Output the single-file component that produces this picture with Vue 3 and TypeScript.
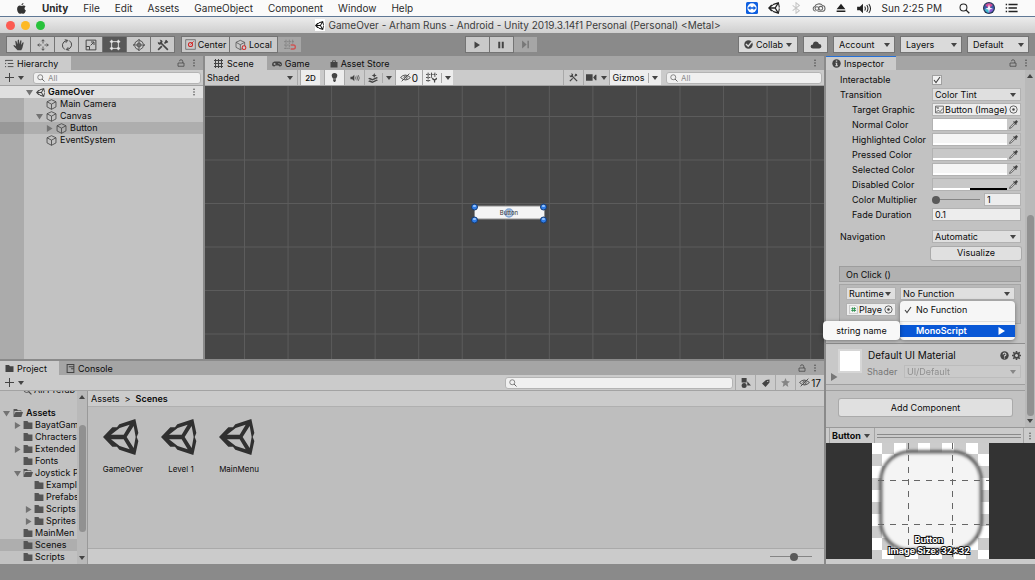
<script setup lang="ts">
import { ref } from 'vue'

interface TreeRow {
  name: string
  depth: number
  arrow?: 'open' | 'closed'
  icon: string
  selected?: boolean
  bold?: boolean
}

interface ColorRow {
  label: string
  value: string
  alpha: number
}

const menus = ['File', 'Edit', 'Assets', 'GameObject', 'Component', 'Window', 'Help']
const tools = ['hand', 'move', 'rotate', 'scale', 'rect', 'transform', 'wrench']
const activeTool = ref('rect')

const hierarchy: TreeRow[] = [
  { name: 'Main Camera', depth: 1, icon: 'cube' },
  { name: 'Canvas', depth: 1, arrow: 'open', icon: 'cube' },
  { name: 'Button', depth: 2, arrow: 'closed', icon: 'cube', selected: true },
  { name: 'EventSystem', depth: 1, icon: 'cube' },
]

const folders: TreeRow[] = [
  { name: 'Assets', depth: 0, arrow: 'open', icon: 'folder-open', bold: true },
  { name: 'BayatGam', depth: 1, arrow: 'closed', icon: 'folder' },
  { name: 'Chracters', depth: 1, icon: 'folder' },
  { name: 'Extended', depth: 1, arrow: 'closed', icon: 'folder' },
  { name: 'Fonts', depth: 1, icon: 'folder' },
  { name: 'Joystick P', depth: 1, arrow: 'open', icon: 'folder-open' },
  { name: 'Example', depth: 2, icon: 'folder' },
  { name: 'Prefabs', depth: 2, icon: 'folder' },
  { name: 'Scripts', depth: 2, arrow: 'closed', icon: 'folder' },
  { name: 'Sprites', depth: 2, arrow: 'closed', icon: 'folder' },
  { name: 'MainMen', depth: 1, icon: 'folder' },
  { name: 'Scenes', depth: 1, icon: 'folder', selected: true },
  { name: 'Scripts', depth: 1, icon: 'folder' },
]

const scenes = ['GameOver', 'Level 1', 'MainMenu']

const colors = ref<ColorRow[]>([
  { label: 'Normal Color', value: '#ffffff', alpha: 100 },
  { label: 'Highlighted Color', value: '#f5f5f5', alpha: 100 },
  { label: 'Pressed Color', value: '#c8c8c8', alpha: 100 },
  { label: 'Selected Color', value: '#f5f5f5', alpha: 100 },
  { label: 'Disabled Color', value: '#c8c8c8', alpha: 50 },
])

const interactable = ref(true)
const multiplier = ref(1)
const fade = ref('0.1')
const zoomLevel = ref(60)

const gridX = Array.from({ length: 15 }, (_, i) => 40 + i * 43.55)
const gridY = Array.from({ length: 6 }, (_, i) => 30.5 + i * 43.5)
const handles = [[270, 121], [339, 121], [270, 134], [339, 134]]
</script>

<template>
  <div class="desktop">
    <svg class="sprite" aria-hidden="true">
      <symbol id="unity" viewBox="0 0 108 108">
        <path fill-rule="evenodd" d="M0 54 28 25H42L49 16 97 0 106 42 101 54 106 66 97 108 49 92 42 83H28ZM24 47H62L80 17 50 27ZM24 61 50 81 80 91 62 61ZM71 54 92 87 98 54 92 21Z" />
      </symbol>
      <symbol id="apple" viewBox="0 0 16 16">
        <path d="M10.8 0c.1 1.900-1.300 3.300-2.900 3.300C7.700 1.700 9.300.1 10.800 0ZM8.200 4.400c.6 0 1.600-.8 3-.7 1 .1 2 .5 2.700 1.500-2.300 1.500-2 4.700.5 5.800-.7 2-2.100 4.700-3.700 4.700-1 0-1.300-.6-2.600-.6s-1.600.6-2.600.6C3.500 15.700 1.600 11.900 1.600 8.900 1.600 5.900 3.400 3.900 5.500 3.800c1.200 0 2 .6 2.700.6Z" />
      </symbol>
      <symbol id="teamviewer" viewBox="0 0 16 16">
        <rect width="16" height="16" rx="2" fill="#0e5fe0" /><circle cx="8" cy="8" r="6.200" fill="#fff" />
        <path fill="#0e5fe0" d="m2.500 8 3.500-3v2h4V5l3.500 3-3.500 3V9H6v2Z" />
      </symbol>
      <symbol id="bluetooth" viewBox="0 0 16 16">
        <path fill="none" stroke="#c5c5c5" stroke-width="1.400" d="m3.500 4.500 9 7L8 15V1l4.500 3.500-9 7" />
      </symbol>
      <symbol id="creative" viewBox="0 0 20 16">
        <g fill="none" stroke="#666" stroke-width="1.500"><path d="M5 12.500C1 12 .5 7 4 6c1-4 8-5.500 11-1.500 4 0 5 6.500 1 8H8" /><circle cx="7" cy="8.700" r="2.600" /><circle cx="12.500" cy="8.500" r="2.800" /></g>
      </symbol>
      <symbol id="eject" viewBox="0 0 16 16"><path d="m8 1 7 9H1ZM1 12h14v2.500H1Z" /></symbol>
      <symbol id="volume" viewBox="0 0 22 16">
        <path d="M1 5.500h4L9.500 1v14L5 10.500H1Z" /><path fill="none" stroke="currentColor" stroke-width="1.500" d="M12 5q2 3 0 6M15 3q3.500 5 0 10M18 1.500q5 6.500 0 13" />
      </symbol>
      <symbol id="search" viewBox="0 0 16 16">
        <g fill="none" stroke="currentColor"><circle cx="6.500" cy="6.500" r="5" stroke-width="1.500" /><path stroke-width="2" d="m10 10 5 5" /></g>
      </symbol>
      <symbol id="siri" viewBox="0 0 16 16">
        <circle cx="8" cy="8" r="8" fill="#25324f" /><circle cx="8" cy="8" r="6.600" fill="#3c5aa8" />
        <path fill="#d14c93" d="M3 4q5-5 10 0L8 9Z" /><path fill="#41bcd0" d="M2 10q3 5 6 4L7 8Z" /><path fill="#8d5ad0" d="M14 9q-2 5-6 5l1-6Z" /><path fill="#f4f4ff" d="m8 3 1.500 4.500L13 9l-4 1-1 4-1-4-4-1 3.500-1.500Z" />
      </symbol>
      <symbol id="list" viewBox="0 0 20 16">
        <path d="M5 2h13v2H5ZM5 7h12v2H5ZM5 12h13v2H5ZM1 2h2v2H1ZM1 7h2v2H1ZM1 12h2v2H1Z" />
      </symbol>
      <symbol id="hand" viewBox="0 0 16 16">
        <path d="M6 15 1 9.500Q0 8 1.500 8L4 9.500 3 3q.8-1.400 1.600 0L6 7 6.300 1.500q1-1.400 1.700 0L8.400 7l1.400-5q1.200-1 1.500.4L10.800 8l2-3.400q1.300-.8 1.400.5L12.500 12 11 15Z" />
      </symbol>
      <symbol id="move" viewBox="0 0 16 16">
        <path fill="none" stroke="currentColor" stroke-width="1.100" d="M8 1v5M8 10v5M1 8h5M10 8h5M6 3l2-2 2 2M6 13l2 2 2-2M3 6 1 8l2 2M13 6l2 2-2 2" />
      </symbol>
      <symbol id="rotate" viewBox="0 0 16 16">
        <path fill="none" stroke="currentColor" stroke-width="1.300" d="M5 14Q1 11 2 7t6-5M5 1l4 .8L6.500 5M11 2q4 3 3 7t-6 5M11 15l-4-.8L9.500 11" />
      </symbol>
      <symbol id="scale" viewBox="0 0 16 16">
        <path fill="none" stroke="currentColor" stroke-width="1.300" d="M1.500 1.500h13v13h-13ZM1.500 10h4.500v4.500M7.500 8.500l4-4M8 4h4v4" />
      </symbol>
      <symbol id="rect" viewBox="0 0 16 16">
        <path fill="none" stroke="currentColor" stroke-width="1.200" d="M3.500 1v14M12.500 1v14M1 3.500h14M1 12.500h14" />
        <path d="M2 2h3v3H2ZM11 2h3v3h-3ZM2 11h3v3H2ZM11 11h3v3h-3Z" />
      </symbol>
      <symbol id="transform" viewBox="0 0 16 16">
        <g fill="none" stroke="currentColor" stroke-width="1.100"><circle cx="8" cy="8" r="6" stroke-dasharray="7.400 2" /><path d="M8 .5v15M.5 8h15M6.500 2 8 .5 9.500 2M6.500 14 8 15.500 9.500 14M2 6.500.5 8 2 9.500M14 6.500 15.500 8 14 9.500" /><circle cx="8" cy="8" r="2.600" /></g>
      </symbol>
      <symbol id="wrench" viewBox="0 0 16 16">
        <path fill="none" stroke="currentColor" stroke-width="2.200" d="m5 5 9.500 9.500M10 6l3.500-3.500M6.500 9.500l-5 5" />
        <path d="M1 3.500 3 5l2-2-1.500-2q3-.5 4 2L6 7 3 7.500Q.8 6.500 1 3.500ZM12 1l3 3-2 1.500L10.500 3Z" />
      </symbol>
      <symbol id="pivot" viewBox="0 0 16 16">
        <path fill="none" stroke="#555" d="M1 1h14v14H1Z" /><path stroke="#c33" stroke-width="1.400" d="m8 8 4.500-4.500" /><circle cx="8" cy="8" r="3" fill="none" stroke="#d02b2b" stroke-width="1.500" />
      </symbol>
      <symbol id="cube" viewBox="0 0 16 16">
        <path fill="none" stroke="currentColor" stroke-width="1.200" stroke-linejoin="round" d="M8 1 14.500 4v7.500L8 15l-6.500-3.500V4ZM1.500 4 8 7.500 14.500 4M8 7.500V15" />
      </symbol>
      <symbol id="local" viewBox="0 0 18 16">
        <path fill="none" stroke="#555" stroke-width="1.200" d="M8 1 14.500 4v7.500L8 15l-6.500-3.500V4ZM1.500 4 8 7.500 14.500 4M8 7.500V15" /><circle cx="13.500" cy="12" r="2.800" fill="#ccc" stroke="#d02b2b" stroke-width="1.600" />
      </symbol>
      <symbol id="snap" viewBox="0 0 18 16">
        <path fill="none" stroke="#777" stroke-dasharray="3 1" d="M3 0v14M8 0v14M13 0v6M0 3h16M0 8h8M0 13h8" /><path fill="none" stroke="#c55" stroke-width="2" d="M10 8h4q3 0 3 3t-3 3h-4" />
      </symbol>
      <symbol id="play" viewBox="0 0 16 16"><path d="m3 1 11 7-11 7Z" /></symbol>
      <symbol id="pause" viewBox="0 0 16 16"><path d="M2.500 1.500h4v13h-4ZM9.500 1.500h4v13h-4Z" /></symbol>
      <symbol id="step" viewBox="0 0 16 16"><path d="m2 1 8 7-8 7ZM11.500 1.500H14v13h-2.500Z" /></symbol>
      <symbol id="check" viewBox="0 0 16 16">
        <circle cx="8" cy="8" r="7.500" /><path fill="none" stroke="#ddd" stroke-width="2.500" d="m3.500 7 4 4 6.500-8" />
      </symbol>
      <symbol id="tick" viewBox="0 0 16 16"><path fill="none" stroke="currentColor" stroke-width="2.200" d="m2 8 4 5L14 2" /></symbol>
      <symbol id="cloud" viewBox="0 0 20 16"><path d="M5 14Q1 14 1 10.500T5 7q0-5 5-5 4 0 5 4.500 4 .2 4 3.700T15.500 14Z" /></symbol>
      <symbol id="tree" viewBox="0 0 16 16"><path fill="none" stroke="currentColor" stroke-width="1.600" d="M1 2.500h13M5 8h10M5 13.500h10M1 2v2M1 7v2M1 12.500v2" /></symbol>
      <symbol id="hash" viewBox="0 0 9 9"><path fill="none" stroke="currentColor" d="M1.500 0v9M4.500 0v9M7.500 0v9M0 1.500h9M0 4.500h9M0 7.500h9" /></symbol>
      <symbol id="pad" viewBox="0 0 20 16">
        <path fill-rule="evenodd" d="M5 3h10q5 1 5 5.500T16 13q-2 0-3-2H7q-1 2-3 2-4 0-4-4.500T5 3ZM3 7v2h1.200v1.200h1.800V9h1.500V7H6V5.800H4.200V7ZM13 6v1.800h2V6ZM15.500 8.200V10h2V8.200Z" />
      </symbol>
      <symbol id="bag" viewBox="0 0 16 16"><path d="M1 4h14v11H1Z" /><path fill="none" stroke="currentColor" stroke-width="1.600" d="M5 5V1.500h6V5" /></symbol>
      <symbol id="lock" viewBox="0 0 16 16"><path fill="none" stroke="currentColor" stroke-width="1.500" d="M2 8h12v6.500H2ZM5 4.500q0-3 3-3t3.500 3V8" /></symbol>
      <symbol id="dots" viewBox="0 0 4 16"><circle cx="2" cy="2.500" r="1.500" /><circle cx="2" cy="8" r="1.500" /><circle cx="2" cy="13.500" r="1.500" /></symbol>
      <symbol id="info" viewBox="0 0 16 16"><circle cx="8" cy="8" r="7.500" /><path fill="#d0d0d0" d="M6.800 2.500h2.500V5H6.800ZM6 6.500h3.300V11H10.500v1.800H5.800V11H7V8.200H6Z" /></symbol>
      <symbol id="plus" viewBox="0 0 9 9"><path d="M4 0h1v4h4v1H5v4H4V5H0V4h4Z" /></symbol>
      <symbol id="bulb" viewBox="0 0 16 16"><path d="M8 0q5 .2 5 5 0 2-2.500 5h-5Q3 7 3 5q0-4.800 5-5ZM5.500 11h5v2.500L9 16H7l-1.500-2.500Z" /></symbol>
      <symbol id="layers" viewBox="0 0 16 16">
        <path d="m0 9 3-1.500 4 2 7-3 2 1.500-9 4ZM0 13l3-1.500 4 2 7-3 2 1-9 4.500ZM10 0l1.200 2.800L14 4l-2.800 1.200L10 8 8.800 5.200 6 4l2.800-1.200Z" />
      </symbol>
      <symbol id="hidden" viewBox="0 0 20 16">
        <path fill="none" stroke="currentColor" stroke-width="1.600" d="M1 8q8-9 18 0-9 9-18 0M3 15 17 1M7 9q0-4 4-4M9.500 11.500Q14 11 13 6" />
      </symbol>
      <symbol id="grid" viewBox="0 0 18 16">
        <path fill="none" stroke="currentColor" stroke-width="1.500" stroke-dasharray="3 1" d="M3.500 0v16M9 0v9M14.500 0v7M0 3h18M0 8h9M0 13h8" /><path d="m10 8 4 3 4-3v3l-3 2v3h-2v-3l-3-2Z" />
      </symbol>
      <symbol id="camera" viewBox="0 0 20 16"><path d="M0 2h12v12H0ZM13 8l4-5h2v10h-2Z" /></symbol>
      <symbol id="folder" viewBox="0 0 18 16"><path d="M1 1h7l2 2.500h7V15H1Z" /></symbol>
      <symbol id="folder-open" viewBox="0 0 18 16"><path fill-rule="evenodd" d="M1 1h6l2 2h6v3h3l-3 9H1ZM2.500 5v6L4.500 6H14V4.500H3Z" /></symbol>
      <symbol id="console" viewBox="0 0 16 16"><path fill="none" stroke="currentColor" stroke-width="1.800" d="M2 1h12v14H2ZM5 5h9M9 8.500h5" /></symbol>
      <symbol id="shapes" viewBox="0 0 16 16"><path d="M1 0h8v7H1ZM10 5l6 7h-6Z" /><circle cx="5" cy="12" r="4" /></symbol>
      <symbol id="tag" viewBox="0 0 16 16"><path fill-rule="evenodd" d="m8 2 7-1v6L7 16 0 9ZM10.500 4v2h2V4Z" /></symbol>
      <symbol id="star" viewBox="0 0 16 16"><path d="m8 0 2.300 5.500 5.700.5-4.400 3.700L13 16l-5-3.400L3 16l1.400-6.300L0 6l5.700-.5Z" /></symbol>
      <symbol id="image" viewBox="0 0 16 16"><path fill="none" stroke="currentColor" stroke-width="1.300" d="M1 2h14v12H1ZM2 13l4-4 3 3 5-6M2 3l4 4M4 5h3" /></symbol>
      <symbol id="target" viewBox="0 0 16 16"><circle cx="8" cy="8" r="6.500" fill="none" stroke="currentColor" stroke-width="1.400" /><circle cx="8" cy="8" r="2.200" /></symbol>
      <symbol id="dropper" viewBox="0 0 16 16">
        <path fill="none" stroke="currentColor" stroke-width="1.300" d="m9 5-7 7-1 3 3-1 7-7" /><path d="m7 3 2-1 1 1 3-3 3 3-3 3 1 1-1.500 2Z" />
      </symbol>
      <symbol id="script" viewBox="0 0 16 16">
        <path fill="#f4f4f4" stroke="#aaa" d="M1 .5h11l3 3v12H1Z" /><path fill="none" stroke="#2f9150" stroke-width="1.600" d="M6.500 4v8M9.800 4v8M4 6.500h8.500M4 9.800h8.500" />
      </symbol>
      <symbol id="help" viewBox="0 0 16 16"><circle cx="8" cy="8" r="7.500" /><path fill="none" stroke="#d0d0d0" stroke-width="2" d="M5.500 6q0-2.500 2.500-2.500T10.500 6 8 8.500V10M8 11.500v2" /></symbol>
      <symbol id="gear" viewBox="0 0 16 16">
        <circle cx="8" cy="8" r="4.200" fill="none" stroke="currentColor" stroke-width="3" /><path stroke="currentColor" stroke-width="2.800" d="M8 0v3M8 13v3M0 8h3M13 8h3M2.300 2.300l2 2M11.700 11.700l2 2M2.300 13.700l2-2M11.700 4.300l2-2" />
      </symbol>
      <symbol id="open" viewBox="0 0 16 16"><path d="M0 2h16L8 15Z" /></symbol>
      <symbol id="closed" viewBox="0 0 16 16"><path d="M2 0v16L15 8Z" /></symbol>
    </svg>

    <nav class="menubar" aria-label="Menu bar">
      <svg class="i11 apple"><use href="#apple" /></svg>
      <button class="app-name">Unity</button>
      <button v-for="m in menus" :key="m">{{ m }}</button>
      <div class="tray">
        <svg class="i12"><use href="#teamviewer" /></svg>
        <svg class="i12"><use href="#unity" /></svg>
        <svg class="i12"><use href="#bluetooth" /></svg>
        <svg class="i14"><use href="#creative" /></svg>
        <svg class="i10"><use href="#eject" /></svg>
        <svg class="i16"><use href="#volume" /></svg>
        <time>Sun 2:25 PM</time>
        <svg class="i11 spot"><use href="#search" /></svg>
        <svg class="i12 siri"><use href="#siri" /></svg>
        <svg class="i14"><use href="#list" /></svg>
      </div>
    </nav>

    <header class="titlebar">
      <div class="lights">
        <button class="red" aria-label="Close"></button>
        <button class="yellow" aria-label="Minimize"></button>
        <button class="green" aria-label="Zoom"></button>
      </div>
      <h1><span class="doc"><svg class="i9"><use href="#unity" /></svg></span>GameOver - Arham Runs - Android - Unity 2019.3.14f1 Personal (Personal) &lt;Metal&gt;</h1>
    </header>

    <div class="toolbar">
      <div class="group">
        <button v-for="t in tools" :key="t" class="tool" :class="{ on: activeTool === t }" :aria-label="t" @click="activeTool = t">
          <svg class="i12"><use :href="'#' + t" /></svg>
        </button>
      </div>
      <div class="group pivots">
        <button class="tool wide"><svg class="i11"><use href="#pivot" /></svg>Center</button>
        <button class="tool wide"><svg class="i12"><use href="#local" /></svg>Local</button>
        <button class="tool faded" aria-label="Snap"><svg class="i12"><use href="#snap" /></svg></button>
      </div>
      <div class="group playback">
        <button class="tool" aria-label="Play"><svg class="i8"><use href="#play" /></svg></button>
        <button class="tool" aria-label="Pause"><svg class="i8"><use href="#pause" /></svg></button>
        <button class="tool faded" aria-label="Step"><svg class="i9"><use href="#step" /></svg></button>
      </div>
      <div class="services">
        <button class="tool collab"><svg class="i9"><use href="#check" /></svg>Collab<i class="caret"></i></button>
        <button class="tool" aria-label="Cloud"><svg class="i12"><use href="#cloud" /></svg></button>
        <span class="select raised"><select aria-label="Account"><option>Account</option></select></span>
        <span class="select raised"><select aria-label="Layers"><option>Layers</option></select></span>
        <span class="select raised"><select aria-label="Layout"><option>Default</option></select></span>
      </div>
    </div>

    <main class="workspace">
      <div class="left">
        <div class="upper">
          <section class="panel hierarchy">
            <div class="tabs">
              <button class="tab active"><svg class="i9"><use href="#tree" /></svg>Hierarchy</button>
              <div class="tab-tools"><svg class="i8"><use href="#lock" /></svg><svg class="i8"><use href="#dots" /></svg></div>
            </div>
            <div class="bar">
              <button class="add" aria-label="Create"><svg class="i9"><use href="#plus" /></svg><i class="caret"></i></button>
              <label class="search"><svg class="i8"><use href="#search" /></svg><input type="search" placeholder="All" aria-label="Search hierarchy" /></label>
            </div>
            <ul class="tree objects">
              <li class="scene-row"><svg class="i8 arrow"><use href="#open" /></svg><svg class="i9"><use href="#unity" /></svg>GameOver<svg class="i8 more"><use href="#dots" /></svg></li>
              <li v-for="row in hierarchy" :key="row.name" :class="['depth' + row.depth, { selected: row.selected }]">
                <svg class="i8 arrow"><use v-if="row.arrow" :href="'#' + row.arrow" /></svg>
                <svg class="i11"><use :href="'#' + row.icon" /></svg>{{ row.name }}
              </li>
            </ul>
          </section>

          <section class="panel scene">
            <div class="tabs">
              <button class="tab active"><svg class="i9"><use href="#hash" /></svg>Scene</button>
              <button class="tab"><svg class="i10"><use href="#pad" /></svg>Game</button>
              <button class="tab store"><svg class="i8"><use href="#bag" /></svg>Asset Store</button>
              <div class="tab-tools"><svg class="i8"><use href="#dots" /></svg></div>
            </div>
            <div class="bar scene-bar">
              <span class="select shaded"><select aria-label="Draw mode"><option>Shaded</option></select></span>
              <button class="cell lit two-d">2D</button>
              <button class="cell lit" aria-label="Lighting"><svg class="i9"><use href="#bulb" /></svg></button>
              <button class="cell" aria-label="Audio"><svg class="i10"><use href="#volume" /></svg></button>
              <button class="cell split" aria-label="Effects"><svg class="i10"><use href="#layers" /></svg><span class="drop"><i class="caret"></i></span></button>
              <button class="cell lit hide"><svg class="i11"><use href="#hidden" /></svg>0</button>
              <button class="cell lit split" aria-label="Grid"><svg class="i11"><use href="#grid" /></svg><span class="drop"><i class="caret"></i></span></button>
              <button class="cell push" aria-label="Tools"><svg class="i9"><use href="#wrench" /></svg></button>
              <button class="cell cam" aria-label="Camera"><svg class="i11"><use href="#camera" /></svg><i class="caret"></i></button>
              <button class="cell lit gizmos">Gizmos<span class="drop"><i class="caret"></i></span></button>
              <label class="search"><svg class="i8"><use href="#search" /></svg><input type="search" placeholder="All" aria-label="Search scene" /></label>
            </div>
            <svg class="viewport" viewBox="0 0 620 273" preserveAspectRatio="xMidYMid slice" role="img" aria-label="Scene view">
              <rect width="620" height="273" fill="#474747" />
              <g stroke="#5c5c5c">
                <line v-for="x in gridX" :key="'x' + x" :x1="x" :x2="x" y1="0" y2="273" />
                <line v-for="y in gridY" :key="'y' + y" x1="0" x2="620" :y1="y" :y2="y" />
              </g>
              <rect x="270" y="120" width="70" height="13" rx="2" fill="#f4f4f4" stroke="#8f8f8f" />
              <circle cx="304.500" cy="127" r="4" fill="#c4d3e6" stroke="#7fa4d4" stroke-width="1.500" />
              <text x="304.500" y="128.500" font-size="6" text-anchor="middle" fill="#333">Button</text>
              <g v-for="(h, i) in handles" :key="i">
                <circle :cx="h[0]" :cy="h[1]" r="3" fill="#2f7de8" stroke="#173b70" />
                <ellipse :cx="h[0]" :cy="h[1] - 1" rx="1.700" ry="1" fill="#9cc6fb" />
              </g>
            </svg>
          </section>
        </div>

        <section class="panel project">
          <div class="tabs">
            <button class="tab active"><svg class="i9"><use href="#folder" /></svg>Project</button>
            <button class="tab console"><svg class="i9"><use href="#console" /></svg>Console</button>
            <div class="tab-tools"><svg class="i8"><use href="#lock" /></svg><svg class="i8"><use href="#dots" /></svg></div>
          </div>
          <div class="bar">
            <button class="add" aria-label="Create"><svg class="i9"><use href="#plus" /></svg><i class="caret"></i></button>
            <label class="search project-search"><svg class="i8"><use href="#search" /></svg><input type="search" aria-label="Search project" /></label>
            <button class="cell" aria-label="Filter by type"><svg class="i10"><use href="#shapes" /></svg></button>
            <button class="cell" aria-label="Filter by label"><svg class="i8"><use href="#tag" /></svg></button>
            <button class="cell dim" aria-label="Favorites"><svg class="i9"><use href="#star" /></svg></button>
            <button class="cell hide"><svg class="i11"><use href="#hidden" /></svg>17</button>
          </div>
          <div class="browser">
            <ul class="tree folders">
              <li class="clipped depth1"><svg class="i8 arrow"></svg><svg class="i9"><use href="#search" /></svg>All Prefab</li>
              <li v-for="row in folders" :key="row.depth + row.name" :class="['depth' + row.depth, { selected: row.selected, strong: row.bold }]">
                <svg class="i8 arrow"><use v-if="row.arrow" :href="'#' + row.arrow" /></svg>
                <svg class="i10 folder"><use :href="'#' + row.icon" /></svg>{{ row.name }}
              </li>
            </ul>
            <div class="scroll"><i class="caret up"></i><div class="track"><div class="thumb"></div></div><i class="caret"></i></div>
            <div class="files">
              <div class="crumbs"><a href="#assets">Assets</a><span>&gt;</span><b>Scenes</b></div>
              <ul class="grid">
                <li v-for="s in scenes" :key="s"><svg><use href="#unity" /></svg>{{ s }}</li>
              </ul>
              <div class="sizer"><input v-model="zoomLevel" type="range" min="0" max="100" aria-label="Icon size" /></div>
            </div>
          </div>
        </section>
      </div>

      <aside class="panel inspector">
        <div class="tabs">
          <button class="tab active focused"><svg class="i9"><use href="#info" /></svg>Inspector</button>
          <div class="tab-tools"><svg class="i8"><use href="#lock" /></svg><svg class="i8"><use href="#dots" /></svg></div>
        </div>
        <div class="inspect">
          <div class="props">
            <div class="row"><label for="interactable">Interactable</label><span class="box"><input id="interactable" v-model="interactable" type="checkbox" /><svg v-if="interactable" class="i8"><use href="#tick" /></svg></span></div>
            <div class="row"><label for="transition">Transition</label><span class="select field"><select id="transition"><option>Color Tint</option></select></span></div>
            <div class="row sub"><label for="graphic">Target Graphic</label><button id="graphic" class="field object"><svg class="i9"><use href="#image" /></svg><span>Button (Image)</span><svg class="i9 end"><use href="#target" /></svg></button></div>
            <div v-for="(c, i) in colors" :key="c.label" class="row sub">
              <label :for="'color' + i">{{ c.label }}</label>
              <span class="field color">
                <span class="swatch"><input :id="'color' + i" v-model="c.value" type="color" /><span class="alpha"><span :style="{ width: c.alpha + '%' }"></span></span></span>
                <button class="dropper" :aria-label="'Pick ' + c.label"><svg class="i9"><use href="#dropper" /></svg></button>
              </span>
            </div>
            <div class="row sub"><label for="mult">Color Multiplier</label><span class="field multi"><input id="mult" v-model="multiplier" type="range" min="1" max="5" /><input v-model="multiplier" class="text" type="text" aria-label="Color Multiplier value" /></span></div>
            <div class="row sub"><label for="fade">Fade Duration</label><input id="fade" v-model="fade" class="field text" type="text" /></div>
            <div class="row nav"><label for="navigation">Navigation</label><span class="select field"><select id="navigation"><option>Automatic</option></select></span></div>
            <div class="row"><button class="push-button visualize">Visualize</button></div>

            <div class="event">
              <h2>On Click ()</h2>
              <div class="listener">
                <span class="select field"><select aria-label="Call state"><option>Runtime</option></select></span>
                <span class="select field"><select aria-label="Function"><option>No Function</option></select></span>
                <button class="field object" aria-label="Listener object"><svg class="i9"><use href="#script" /></svg><span>Playe</span><svg class="i9 end"><use href="#target" /></svg></button>
                <div class="popup" role="menu">
                  <button role="menuitem"><svg class="i8"><use href="#tick" /></svg>No Function</button>
                  <hr />
                  <button role="menuitem" class="hot">MonoScript<svg class="i9"><use href="#closed" /></svg></button>
                  <div class="submenu" role="menu"><button role="menuitem">string name</button></div>
                </div>
              </div>
            </div>

            <div class="material">
              <svg class="i8 fold"><use href="#closed" /></svg>
              <span class="thumbnail"></span>
              <div class="material-body">
                <div class="material-title"><h2>Default UI Material</h2><svg class="i9"><use href="#help" /></svg><svg class="i9"><use href="#gear" /></svg></div>
                <div class="shader"><label for="shader">Shader</label><span class="select field"><select id="shader" disabled><option>UI/Default</option></select></span></div>
              </div>
            </div>
            <div class="add-wrap"><button class="push-button">Add Component</button></div>
          </div>
          <div class="scroll"><i class="caret up"></i><div class="track low"><div class="thumb"></div></div><i class="caret"></i></div>
        </div>
        <div class="preview-head"><button>Button<i class="caret"></i></button><span class="grip"></span><span class="kebab"><svg class="i8"><use href="#dots" /></svg></span></div>
        <div class="preview">
          <svg viewBox="0 0 117 116" role="img" aria-label="Button sprite preview">
            <defs>
              <pattern id="checker" width="24" height="24" patternUnits="userSpaceOnUse" x="10" y="11"><rect width="24" height="24" fill="#fff" /><path fill="#ccc" d="M0 12h12v12H0ZM12 0h12v12H12Z" /></pattern>
              <filter id="soft"><feGaussianBlur stdDeviation="1.400" /></filter>
            </defs>
            <rect width="117" height="116" fill="url(#checker)" />
            <rect x="9" y="9" width="100" height="98" rx="29" fill="#f4f4f4" stroke="#303030" stroke-width="3" filter="url(#soft)" />
            <path fill="none" stroke="#666" stroke-dasharray="6 6" d="M36.500 0v116M80.500 0v116M6 37.500h111M6 81.500h111" />
            <g font-size="9" font-weight="700" text-anchor="middle" fill="#fff" stroke="#111" stroke-width="2" paint-order="stroke">
              <text x="57" y="100">Button</text><text x="57" y="111">Image Size: 32x32</text>
            </g>
          </svg>
        </div>
      </aside>
    </main>
    <footer class="status"></footer>
  </div>
</template>

<style>
body { margin: 0; overflow: hidden; }
</style>

<style scoped>
.desktop { height: 100vh; display: flex; flex-direction: column; background: #8a8a8a; color: #0c0c0c; font: 9px/12px Inter, "Open Sans", sans-serif; }
.desktop *, .desktop *::before, .desktop *::after { box-sizing: border-box; }
button, input, select { font: inherit; color: inherit; margin: 0; padding: 0; border: 0; background: none; border-radius: 0; outline: 0; }
button { white-space: nowrap; }
ul, h1, h2 { margin: 0; padding: 0; list-style: none; font: inherit; }
svg { fill: currentColor; flex: none; color: #444; overflow: visible; }
.sprite { position: absolute; width: 0; height: 0; overflow: hidden; }
.i8 { width: 8px; height: 8px; }
.i9 { width: 9px; height: 9px; }
.i10 { width: 10px; height: 10px; }
.i11 { width: 11px; height: 11px; }
.i12 { width: 12px; height: 12px; }
.i14 { width: 14px; height: 12px; }
.i16 { width: 16px; height: 11px; }
.caret { flex: none; border: 3px solid transparent; border-top: 4px solid #444; border-bottom: 0; }
.caret.up { border-top: 0; border-bottom: 4px solid #444; }

.menubar { flex: none; height: 16px; display: flex; align-items: center; gap: 15px; padding: 0 16px; background: #fafafa; font-size: 10px; color: #2b2b2b; }
.menubar .apple { color: #333; }
.app-name { font-weight: 700; }
.tray { margin-left: auto; display: flex; align-items: center; gap: 10px; }
.tray svg { color: #222; }
.tray .spot { margin-left: 7px; }
.tray .siri { margin-left: 3px; }

.titlebar { flex: none; height: 17px; display: flex; align-items: center; padding: 0 6px; border-top: 1px solid #5f7895; background: linear-gradient(#ececec, #cfcfcf); font-size: 10px; }
.lights { flex: 1; display: flex; gap: 6px; }
.titlebar::after { content: ""; flex: 1; }
.lights button { width: 9px; height: 9px; border-radius: 50%; }
.red { background: #fc5b52; }
.yellow { background: #fdb924; }
.green { background: #28c23b; }
.titlebar h1 { display: flex; align-items: center; gap: 4px; color: #3c3c3c; white-space: nowrap; }
.doc { display: grid; place-items: center; width: 10px; height: 12px; background: #fff; }
.doc svg { color: #111; }

.toolbar { flex: none; height: 23px; display: flex; align-items: center; padding: 0 7px; background: #8a8a8a; }
.group { display: flex; gap: 1px; }
.pivots { margin-left: 8px; }
.playback { flex: 1; justify-content: center; padding-right: 38px; }
.tool { width: 23px; height: 15px; display: flex; align-items: center; justify-content: center; gap: 2px; background: #c9c9c9; box-shadow: 0 0 0 1px #747474; }
.tool.wide { width: 47px; }
.tool.on { background: #585858; }
.tool.on svg { color: #e8e8e8; }
.tool.faded { background: #a6a6a6; box-shadow: none; }
.tool.faded svg { color: #777; }
.services { display: flex; gap: 7px; }
.services .tool { background: #dadada; }
.services .collab { width: 58px; gap: 3px; }
.select { position: relative; display: flex; align-items: center; }
.select::after { content: ""; position: absolute; right: 4px; border: 3px solid transparent; border-top: 4px solid #444; border-bottom: 0; pointer-events: none; }
.select select { appearance: none; width: 100%; height: 100%; padding: 0 10px 0 2px; }
.raised { width: 60px; height: 15px; background: #dadada; box-shadow: 0 0 0 1px #747474; }
.raised select { padding-left: 5px; }

.workspace { flex: 1; min-height: 0; display: flex; gap: 2px; }
.left { flex: 1; min-width: 0; display: flex; flex-direction: column; gap: 2px; }
.upper { flex: 1; min-height: 0; display: flex; gap: 2px; }
.panel { display: flex; flex-direction: column; min-width: 0; min-height: 0; background: #c2c2c2; }
.tabs { flex: none; height: 14px; display: flex; background: #a5a5a5; }
.tab { height: 14px; display: flex; align-items: center; gap: 3px; padding: 1px 6px 0 5px; }
.tab.active { background: #cbcbcb; }
.tab.focused { border-top: 1px solid #2470d8; padding: 0 12px 0 6px; }
.tab-tools { margin-left: auto; display: flex; align-items: center; gap: 5px; padding-right: 5px; }
.bar { flex: none; height: 16px; display: flex; align-items: center; background: #cbcbcb; border-bottom: 1px solid #a3a3a3; }
.add { display: flex; align-items: center; gap: 4px; padding: 0 5px; }
.search { flex: 1; min-width: 0; height: 12px; display: flex; align-items: center; gap: 3px; padding: 0 3px; border: 1px solid #b4b4b4; border-radius: 3px; background: #f0f0f0; }
.search svg { color: #666; }
.search input { flex: 1; min-width: 0; height: 10px; font-size: 8px; }
.search input::placeholder { color: #8a8a8a; }
.hierarchy { flex: none; width: 203px; }
.hierarchy .tab { padding-right: 13px; }
.hierarchy .search { margin: 0 2px 0 4px; }
.tree { overflow: hidden; }
.tree li { height: 12px; display: flex; align-items: center; gap: 3px; white-space: nowrap; }
.arrow { width: 7px; height: 7px; color: #737373; }
.objects { flex: 1; background: linear-gradient(90deg, #ababab 24px, #c2c2c2 24px); }
.objects .scene-row { padding-left: 26px; padding-right: 5px; background: #e0e0e0; font-weight: 600; }
.more { margin-left: auto; }
.objects .depth1 { padding-left: 36px; }
.objects .depth2 { padding-left: 46px; }
.objects .selected { background: linear-gradient(90deg, #989898 24px, #aeaeae 24px); }
.scene { flex: 1; }
.scene .active { padding: 1px 13px 0 9px; gap: 4px; }
.scene .store { margin-left: 9px; }
.scene-bar .shaded { width: 93px; height: 15px; margin-right: 2px; border-right: 1px solid #aaa; }
.cell { flex: none; width: 20px; height: 15px; display: flex; align-items: center; justify-content: center; gap: 2px; border-left: 1px solid #a9a9a9; }
.lit { background: #ededed; }
.two-d { margin-right: 4px; font-size: 8px; font-weight: 500; }
.drop { padding: 3px 0 3px 3px; border-left: 1px solid #aaa; }
.drop .caret { display: block; }
.split { width: 31px; gap: 4px; }
.hide { width: 27px; gap: 1px; font-size: 10px; }
.push { margin-left: auto; }
.cam { width: 26px; gap: 4px; }
.gizmos { width: 52px; gap: 4px; }
.scene-bar .search { flex: 0 1 156px; margin: 0 2px 0 5px; }
.viewport { flex: 1; min-height: 0; width: 100%; overflow: hidden; }

.project { flex: none; height: 203px; }
.project .tab { padding-right: 12px; }
.project .console { padding-left: 7px; }
.project-search { flex: 0 1 228px; margin-left: auto; margin-right: 2px; }
.project .hide { width: 29px; }
.dim svg { color: #858585; }
.browser { flex: 1; min-height: 0; display: flex; }
.folders { width: 77px; }
.folders .clipped { margin-top: -7px; margin-bottom: 11px; }
.folders li { padding-left: 3px; }
.folders .depth1 { padding-left: 14px; gap: 2px; }
.folders .depth2 { padding-left: 25px; gap: 2px; }
.folders .selected { background: #aeaeae; }
.folders .strong { font-weight: 600; }
.folder { color: #555; }
.scroll { flex: none; width: 10px; display: flex; flex-direction: column; align-items: center; padding: 4px 0; background: #b9b9b9; }
.track { flex: 1; width: 7px; padding: 26px 0 24px; }
.track.low { padding: 137px 0 3px; }
.thumb { height: 100%; border-radius: 4px; background: #919191; }
.files { flex: 1; display: flex; flex-direction: column; border-left: 1px solid #999; background: #bebebe; }
.crumbs { height: 16px; display: flex; align-items: center; gap: 5px; padding: 0 3px; background: #cbcbcb; border-bottom: 1px solid #b0b0b0; }
.crumbs a { color: inherit; text-decoration: none; }
.crumbs b { font-weight: 600; }
.grid { flex: 1; display: flex; padding: 12px 6px; }
.grid li { width: 58px; display: flex; flex-direction: column; align-items: center; gap: 8px; font-size: 8px; }
.grid svg { width: 36px; height: 36px; margin-right: 4px; color: #303030; }
.sizer { height: 16px; display: flex; align-items: center; justify-content: flex-end; padding-right: 12px; background: #cbcbcb; border-top: 1px solid #aaa; }
.sizer input { width: 42px; }
input[type="range"] { appearance: none; height: 10px; background: linear-gradient(#858585, #858585) center / 100% 1px no-repeat; }
input[type="range"]::-webkit-slider-thumb { appearance: none; width: 8px; height: 8px; border-radius: 50%; background: #5a5a5a; }

.inspector { flex: none; width: 209px; }
.inspect { flex: 1; min-height: 0; display: flex; }
.props { flex: 1; min-width: 0; padding-top: 2px; }
.row { height: 15px; display: flex; align-items: center; padding: 0 4px 0 14px; }
.row label { flex: 1; white-space: nowrap; }
.row.sub { padding-left: 26px; }
.field { width: 89px; height: 13px; background: #dfdfdf; border: 1px solid #b2b2b2; }
.box { position: relative; display: flex; align-items: center; width: 89px; }
.box input { appearance: none; width: 10px; height: 10px; background: #f0f0f0; border: 1px solid #a0a0a0; }
.box svg { position: absolute; left: 1px; pointer-events: none; }
.object { display: flex; align-items: center; gap: 1px; padding: 0 2px; background: #ededed; }
.object span { flex: 1; overflow: hidden; text-align: left; }
.color { display: flex; background: #c8c8c8; }
.swatch { flex: 1; display: flex; flex-direction: column; }
.swatch input { flex: 1; width: 100%; min-height: 0; height: 9px; }
.swatch input::-webkit-color-swatch-wrapper { padding: 0; }
.swatch input::-webkit-color-swatch { border: 0; border-radius: 0; }
.alpha { height: 2px; background: #000; }
.alpha span { display: block; height: 2px; background: #fff; }
.dropper { width: 13px; display: grid; place-items: center; }
.multi { display: flex; align-items: center; gap: 4px; background: none; border: 0; }
.multi input[type="range"] { width: 48px; height: 13px; }
.text { min-width: 0; height: 13px; padding: 0 2px; background: #ededed; border: 1px solid #b2b2b2; }
.multi .text { flex: 1; }
.nav { margin-top: 7px; }
.push-button { height: 13px; background: #e0e0e0; border-radius: 2px; box-shadow: 0 0 0 1px #aaa; }
.visualize { width: 90px; margin: 3px 0 0 auto; }
.event { margin: 7px 4px 0 13px; }
.event h2 { height: 16px; padding: 2px 6px 0; background: #b1b1b1; border: 1px solid #9d9d9d; }
.listener { position: relative; margin-top: 2px; height: 40px; padding: 2px 5px 0 6px; display: grid; grid-template-columns: 50px 1fr; grid-auto-rows: 13px; gap: 3px 4px; background: #b9b9b9; border: 1px solid #a5a5a5; }
.listener .field { width: auto; }
.popup { position: absolute; left: 60px; top: 16px; width: 115px; height: 39px; border-radius: 4px; background: #f6f6f6; box-shadow: 0 1px 4px #0006; z-index: 2; }
.popup button { display: flex; align-items: center; width: 100%; height: 17px; padding: 0 4px; gap: 4px; }
.popup hr { margin: 3px 0; border: 0; border-top: 1px solid #ddd; }
.popup .hot { height: 12px; padding: 0 9px 0 16px; justify-content: space-between; background: #0857d6; color: #fff; font-weight: 600; }
.hot svg { color: #fff; height: 8px; }
.submenu { position: absolute; right: 115px; bottom: 0; width: 77px; height: 19px; border-radius: 4px; background: #f8f8f8; box-shadow: 0 1px 4px #0006; }
.submenu button { height: 19px; justify-content: center; }
.material { display: flex; margin-top: 19px; height: 42px; border-top: 1px solid #8f8f8f; border-bottom: 1px solid #9f9f9f; background: #c8c8c8; padding: 4px 4px 0; }
.fold { width: 8px; margin: 25px 0 0; color: #777; }
.thumbnail { flex: none; width: 24px; height: 24px; margin: 1px 5px 0 0; border: 2px solid #d6d6d6; background: #fff; }
.material-body { flex: 1; min-width: 0; }
.material-title { display: flex; align-items: center; gap: 3px; height: 14px; padding-left: 1px; font-size: 10px; }
.material-title h2 { flex: 1; }
.shader { display: flex; align-items: center; justify-content: space-between; margin-top: 3px; color: #777; }
.shader .field { width: 117px; background: #cacaca; border-color: #bcbcbc; }
.shader .field::after { opacity: 0.5; }
.add-wrap { display: flex; margin-top: 5px; padding: 8px 13px; border-top: 1px solid #9f9f9f; }
.add-wrap .push-button { flex: 1; height: 17px; }
.preview-head { flex: none; display: flex; align-items: stretch; height: 16px; border-top: 1px solid #999; background: #cbcbcb; }
.preview-head button { display: flex; align-items: center; gap: 3px; margin-left: 3px; padding: 0 4px 0 2px; border: 1px solid #a5a5a5; border-width: 0 1px; font-weight: 700; }
.grip { flex: 1; height: 4px; margin: 6px 2px; border: 1px solid #8a8a8a; border-width: 1px 0; }
.kebab { width: 12px; display: grid; place-items: center; border-left: 1px solid #a5a5a5; }
.preview { flex: none; height: 121px; display: flex; justify-content: center; border-bottom: 5px solid #cbcbcb; background: #333; }
.preview svg { width: 117px; height: 116px; overflow: hidden; }
.status { flex: none; height: 16px; }
</style>
